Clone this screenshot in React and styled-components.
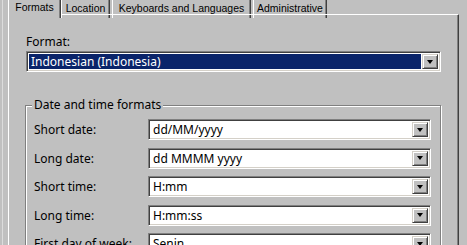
import React from "react";
import styled, { createGlobalStyle } from "styled-components";

const GlobalStyle = createGlobalStyle`
  html, body {
    margin: 0;
    padding: 0;
    background: #c0c0c0;
  }
`;

const Page = styled.div`
  width: 467px;
  height: 245px;
  overflow: hidden;
  background: #c0c0c0;
  box-sizing: border-box;
  padding-left: 8px;
  position: relative;
  &::before {
    content: "";
    position: absolute;
    left: 2px;
    top: 0;
    bottom: 0;
    width: 1px;
    background: #dcdcdc;
  }
`;

const Dialog = styled.div`
  width: 451px;
  display: flex;
  flex-direction: column;
`;

const TabStrip = styled.div`
  display: flex;
  height: 16px;
  margin-top: -2px;
`;

const Tab = styled.div`
  box-sizing: border-box;
  width: ${(p) => p.$width}px;
  height: ${(p) => (p.$active ? "20px" : "18px")};
  margin-top: ${(p) => (p.$active ? "0" : "2px")};
  margin-right: ${(p) => (p.$active ? "0" : "2px")};
  padding-top: ${(p) => (p.$active ? "2px" : "1px")};
  background: #c0c0c0;
  border-left: 1px solid #ffffff;
  border-right: 1px solid #404040;
  box-shadow: inset -1px 0 0 #808080;
  font-family: "Liberation Sans", Arial, sans-serif;
  font-size: 10.5px;
  color: #000;
  line-height: 14px;
  text-align: center;
  white-space: nowrap;
  position: relative;
  z-index: ${(p) => (p.$active ? 2 : 1)};
`;

const Panel = styled.div`
  box-sizing: border-box;
  height: 240px;
  border-top: 1px solid #ffffff;
  border-left: 1px solid #ffffff;
  border-right: 1px solid #404040;
  box-shadow: inset -1px 0 0 #808080;
  padding: 19px 0 0 17px;
  position: relative;
  z-index: 1;
`;

const FieldLabel = styled.div`
  font-family: "Noto Sans", "Open Sans", sans-serif;
  font-size: 12px;
  line-height: 16px;
  color: #000;
  height: 17px;
`;

const Combo = styled.div`
  box-sizing: border-box;
  display: flex;
  align-items: stretch;
  width: ${(p) => p.$width}px;
  height: 21px;
  border-top: 1px solid #808080;
  border-left: 1px solid #808080;
  border-bottom: 1px solid #ffffff;
  border-right: 1px solid #ffffff;
  box-shadow: inset 1px 1px 0 #404040, inset -1px -1px 0 #d4d0c8;
  background: #ffffff;
  padding: 2px;
`;

const Value = styled.div`
  flex: 1;
  display: flex;
  align-items: center;
  margin: ${(p) => (p.$selected ? "0 1px 0 0" : "0")};
  padding-left: 2px;
  font-family: "Noto Sans", "Open Sans", sans-serif;
  font-size: 12px;
  color: ${(p) => (p.$selected ? "#ffffff" : "#000000")};
  background: ${(p) => (p.$selected ? "#0a246a" : "transparent")};
  white-space: nowrap;
  overflow: hidden;
`;

const DropButton = styled.div`
  box-sizing: border-box;
  width: 16px;
  background: #c0c0c0;
  border-top: 1px solid #d4d0c8;
  border-left: 1px solid #d4d0c8;
  border-right: 1px solid #404040;
  border-bottom: 1px solid #404040;
  box-shadow: inset 1px 1px 0 #ffffff, inset -1px -1px 0 #808080;
  display: flex;
  align-items: center;
  justify-content: center;
`;

const Arrow = styled.div`
  width: 0;
  height: 0;
  border-left: 3.5px solid transparent;
  border-right: 3.5px solid transparent;
  border-top: 4px solid #000;
`;

const GroupBox = styled.div`
  box-sizing: border-box;
  margin-top: 33px;
  margin-left: -1px;
  width: 416px;
  height: 200px;
  border: 1px solid #808080;
  box-shadow: inset 1px 1px 0 #ffffff, 1px 1px 0 #ffffff;
  padding: 13px 9px 0 8px;
  position: relative;
  display: flex;
  flex-direction: column;
  gap: 7.5px;
`;

const Legend = styled.div`
  position: absolute;
  top: -9px;
  left: 6px;
  padding: 0 2px;
  background: #c0c0c0;
  font-family: "Noto Sans", "Open Sans", sans-serif;
  font-size: 12px;
  line-height: 16px;
  color: #000;
`;

const Row = styled.div`
  display: flex;
  align-items: center;
  justify-content: space-between;
`;

const RowLabel = styled.div`
  font-family: "Noto Sans", "Open Sans", sans-serif;
  font-size: 12px;
  color: #000;
  white-space: nowrap;
`;

function ComboBox({ value, width, selected }) {
  return (
    <Combo $width={width}>
      <Value $selected={selected}>{value}</Value>
      <DropButton>
        <Arrow />
      </DropButton>
    </Combo>
  );
}

const tabs = [
  ["Formats", 53],
  ["Location", 49],
  ["Keyboards and Languages", 139],
  ["Administrative", 74],
];

const rows = [
  ["Short date:", "dd/MM/yyyy"],
  ["Long date:", "dd MMMM yyyy"],
  ["Short time:", "H:mm"],
  ["Long time:", "H:mm:ss"],
  ["First day of week:", "Senin"],
];

export default function App() {
  return (
    <>
      <GlobalStyle />
      <Page>
        <Dialog>
          <TabStrip>
            {tabs.map(([name, width], i) => (
              <Tab key={name} $width={width} $active={i === 0}>
                {name}
              </Tab>
            ))}
          </TabStrip>
          <Panel>
            <FieldLabel>Format:</FieldLabel>
            <ComboBox value="Indonesian (Indonesia)" width={415} selected />
            <GroupBox>
              <Legend>Date and time formats</Legend>
              {rows.map(([label, value]) => (
                <Row key={label}>
                  <RowLabel>{label}</RowLabel>
                  <ComboBox value={value} width={283} />
                </Row>
              ))}
            </GroupBox>
          </Panel>
        </Dialog>
      </Page>
    </>
  );
}
